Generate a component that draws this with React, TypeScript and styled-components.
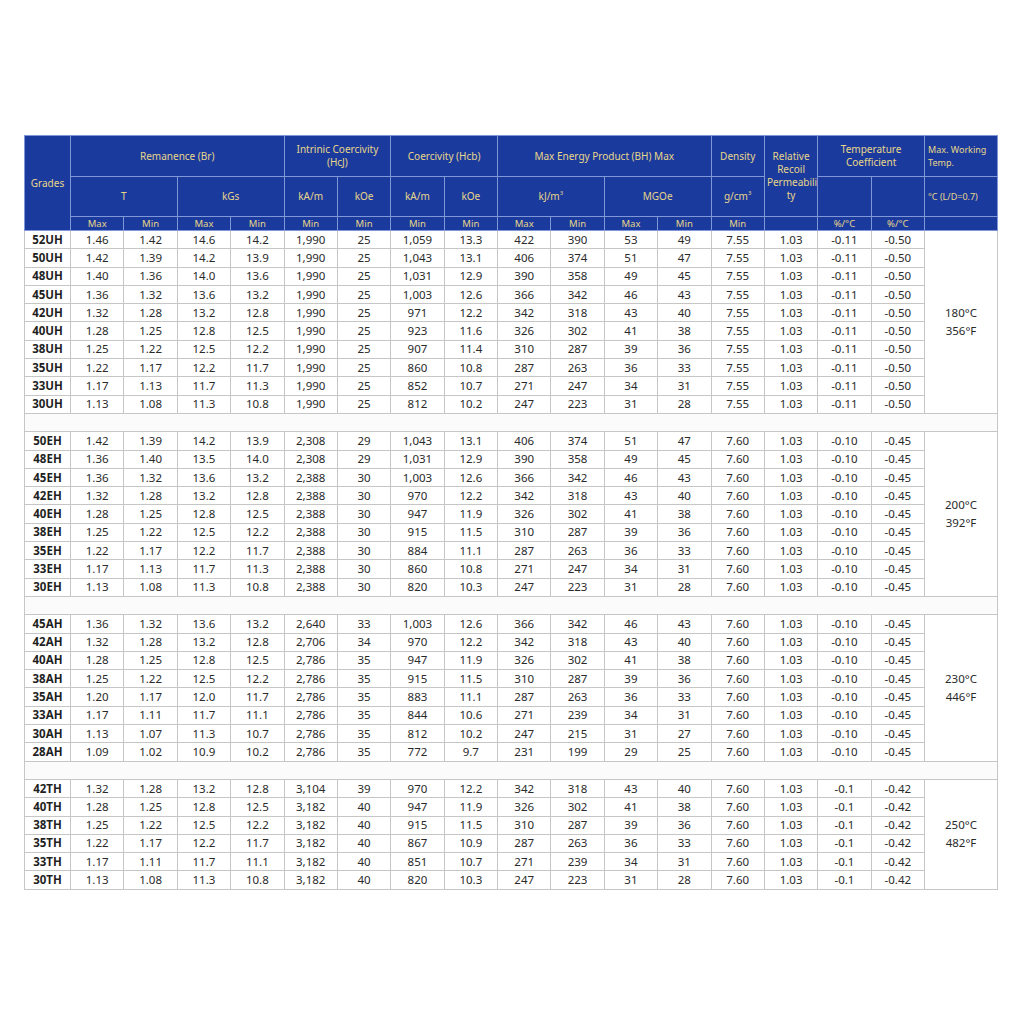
import React from 'react';
import styled, { createGlobalStyle } from 'styled-components';

const Blue = '#1b3a9d';
const HeadText = '#e6d68a';
const HeadLine = '#7f97d6';
const Line = '#c6c6c6';

const GlobalStyle = createGlobalStyle`
    html, body {
        margin: 0;
        padding: 0;
        background: #ffffff;
    }
    body {
        font-family: "Noto Sans", "Open Sans", Arial, sans-serif;
    }
`;

const Page = styled.div`
    width: 1024px;
    height: 1024px;
    padding: 135px 0 0 24px;
    box-sizing: border-box;
`;

const Table = styled.table`
    width: 973px;
    table-layout: fixed;
    border-collapse: collapse;
    border: 1px solid #bdbdbd;
`;

const HeadRow = styled.tr<{ $h: number }>`
    height: ${p => p.$h}px;
`;

const HeadCell = styled.th<{ $left?: boolean; $small?: boolean }>`
    background: ${Blue};
    color: ${HeadText};
    font-weight: 400;
    font-size: ${p => (p.$small ? '9px' : '10px')};
    line-height: 13px;
    text-align: ${p => (p.$left ? 'left' : 'center')};
    padding: ${p => (p.$left ? '0 2px 0 3px' : '0 2px')};
    border: 1px solid ${HeadLine};
    vertical-align: middle;
    overflow: hidden;
`;

const UnitCell = styled(HeadCell)`
    font-size: 9.5px;
    line-height: 11px;
    padding: 0;
`;

const Sup = styled.sup`
    font-size: 6px;
    vertical-align: 5px;
    line-height: 0;
`;

const BodyRow = styled.tr`
    height: 18.3px;
`;

const DataCell = styled.td`
    border: 1px solid ${Line};
    color: #2a2a2a;
    font-size: 11.5px;
    text-align: center;
    padding: 0;
    line-height: 16px;
    white-space: nowrap;
`;

const GradeCell = styled(DataCell)`
    font-weight: 700;
    font-size: 11.5px;
    color: #1f1f1f;
`;

const TempCell = styled(DataCell)`
    line-height: 18px;
    font-size: 11.5px;
    vertical-align: middle;
`;

const GapCell = styled.td`
    border: 1px solid ${Line};
    background: #fbfbfb;
    padding: 0;
`;

type Group = {
    rows: string[];
    tail: string[];
    temp: [string, string];
};

const groups: Group[] = [
    {
        rows: [
            '52UH 1.46 1.42 14.6 14.2 1,990 25 1,059 13.3 422 390 53 49',
            '50UH 1.42 1.39 14.2 13.9 1,990 25 1,043 13.1 406 374 51 47',
            '48UH 1.40 1.36 14.0 13.6 1,990 25 1,031 12.9 390 358 49 45',
            '45UH 1.36 1.32 13.6 13.2 1,990 25 1,003 12.6 366 342 46 43',
            '42UH 1.32 1.28 13.2 12.8 1,990 25 971 12.2 342 318 43 40',
            '40UH 1.28 1.25 12.8 12.5 1,990 25 923 11.6 326 302 41 38',
            '38UH 1.25 1.22 12.5 12.2 1,990 25 907 11.4 310 287 39 36',
            '35UH 1.22 1.17 12.2 11.7 1,990 25 860 10.8 287 263 36 33',
            '33UH 1.17 1.13 11.7 11.3 1,990 25 852 10.7 271 247 34 31',
            '30UH 1.13 1.08 11.3 10.8 1,990 25 812 10.2 247 223 31 28',
        ],
        tail: ['7.55', '1.03', '-0.11', '-0.50'],
        temp: ['180°C', '356°F'],
    },
    {
        rows: [
            '50EH 1.42 1.39 14.2 13.9 2,308 29 1,043 13.1 406 374 51 47',
            '48EH 1.36 1.40 13.5 14.0 2,308 29 1,031 12.9 390 358 49 45',
            '45EH 1.36 1.32 13.6 13.2 2,388 30 1,003 12.6 366 342 46 43',
            '42EH 1.32 1.28 13.2 12.8 2,388 30 970 12.2 342 318 43 40',
            '40EH 1.28 1.25 12.8 12.5 2,388 30 947 11.9 326 302 41 38',
            '38EH 1.25 1.22 12.5 12.2 2,388 30 915 11.5 310 287 39 36',
            '35EH 1.22 1.17 12.2 11.7 2,388 30 884 11.1 287 263 36 33',
            '33EH 1.17 1.13 11.7 11.3 2,388 30 860 10.8 271 247 34 31',
            '30EH 1.13 1.08 11.3 10.8 2,388 30 820 10.3 247 223 31 28',
        ],
        tail: ['7.60', '1.03', '-0.10', '-0.45'],
        temp: ['200°C', '392°F'],
    },
    {
        rows: [
            '45AH 1.36 1.32 13.6 13.2 2,640 33 1,003 12.6 366 342 46 43',
            '42AH 1.32 1.28 13.2 12.8 2,706 34 970 12.2 342 318 43 40',
            '40AH 1.28 1.25 12.8 12.5 2,786 35 947 11.9 326 302 41 38',
            '38AH 1.25 1.22 12.5 12.2 2,786 35 915 11.5 310 287 39 36',
            '35AH 1.20 1.17 12.0 11.7 2,786 35 883 11.1 287 263 36 33',
            '33AH 1.17 1.11 11.7 11.1 2,786 35 844 10.6 271 239 34 31',
            '30AH 1.13 1.07 11.3 10.7 2,786 35 812 10.2 247 215 31 27',
            '28AH 1.09 1.02 10.9 10.2 2,786 35 772 9.7 231 199 29 25',
        ],
        tail: ['7.60', '1.03', '-0.10', '-0.45'],
        temp: ['230°C', '446°F'],
    },
    {
        rows: [
            '42TH 1.32 1.28 13.2 12.8 3,104 39 970 12.2 342 318 43 40',
            '40TH 1.28 1.25 12.8 12.5 3,182 40 947 11.9 326 302 41 38',
            '38TH 1.25 1.22 12.5 12.2 3,182 40 915 11.5 310 287 39 36',
            '35TH 1.22 1.17 12.2 11.7 3,182 40 867 10.9 287 263 36 33',
            '33TH 1.17 1.11 11.7 11.1 3,182 40 851 10.7 271 239 34 31',
            '30TH 1.13 1.08 11.3 10.8 3,182 40 820 10.3 247 223 31 28',
        ],
        tail: ['7.60', '1.03', '-0.1', '-0.42'],
        temp: ['250°C', '482°F'],
    },
];

const subLabels = ['Max', 'Min', 'Max', 'Min', 'Min', 'Min', 'Min', 'Min', 'Max', 'Min', 'Max', 'Min', 'Min', '', '%/°C', '%/°C', ''];

const App: React.FC = () => {
    return (
        <Page>
            <GlobalStyle />
            <Table>
                <colgroup>
                    <col style={{ width: 46 }} />
                    {Array.from({ length: 16 }).map((_, i) => (
                        <col key={i} style={{ width: 53.375 }} />
                    ))}
                    <col style={{ width: 73 }} />
                </colgroup>
                <thead>
                    <HeadRow $h={41}>
                        <HeadCell rowSpan={3}>Grades</HeadCell>
                        <HeadCell colSpan={4}>Remanence (Br)</HeadCell>
                        <HeadCell colSpan={2}>Intrinic Coercivity<br />(HcJ)</HeadCell>
                        <HeadCell colSpan={2}>Coercivity (Hcb)</HeadCell>
                        <HeadCell colSpan={4}>Max Energy Product (BH) Max</HeadCell>
                        <HeadCell>Density</HeadCell>
                        <HeadCell rowSpan={2}>Relative<br />Recoil<br />Permeabili<br />ty</HeadCell>
                        <HeadCell colSpan={2}>Temperature<br />Coefficient</HeadCell>
                        <HeadCell $left $small>Max. Working<br />Temp.</HeadCell>
                    </HeadRow>
                    <HeadRow $h={40}>
                        <HeadCell colSpan={2}>T</HeadCell>
                        <HeadCell colSpan={2}>kGs</HeadCell>
                        <HeadCell>kA/m</HeadCell>
                        <HeadCell>kOe</HeadCell>
                        <HeadCell>kA/m</HeadCell>
                        <HeadCell>kOe</HeadCell>
                        <HeadCell colSpan={2}>kJ/m<Sup>3</Sup></HeadCell>
                        <HeadCell colSpan={2}>MGOe</HeadCell>
                        <HeadCell>g/cm<Sup>3</Sup></HeadCell>
                        <HeadCell />
                        <HeadCell />
                        <HeadCell $left $small>°C (L/D=0.7)</HeadCell>
                    </HeadRow>
                    <HeadRow $h={14}>
                        {subLabels.map((s, i) => (
                            <UnitCell key={i}>{s}</UnitCell>
                        ))}
                    </HeadRow>
                </thead>
                <tbody>
                    {groups.map((g, gi) => (
                        <React.Fragment key={gi}>
                            {gi > 0 && (
                                <BodyRow>
                                    <GapCell colSpan={18} />
                                </BodyRow>
                            )}
                            {g.rows.map((r, ri) => {
                                const [grade, ...vals] = r.split(' ');
                                return (
                                    <BodyRow key={grade}>
                                        <GradeCell>{grade}</GradeCell>
                                        {[...vals, ...g.tail].map((v, vi) => (
                                            <DataCell key={vi}>{v}</DataCell>
                                        ))}
                                        {ri === 0 && (
                                            <TempCell rowSpan={g.rows.length}>
                                                {g.temp[0]}<br />{g.temp[1]}
                                            </TempCell>
                                        )}
                                    </BodyRow>
                                );
                            })}
                        </React.Fragment>
                    ))}
                </tbody>
            </Table>
        </Page>
    );
};

export default App;
